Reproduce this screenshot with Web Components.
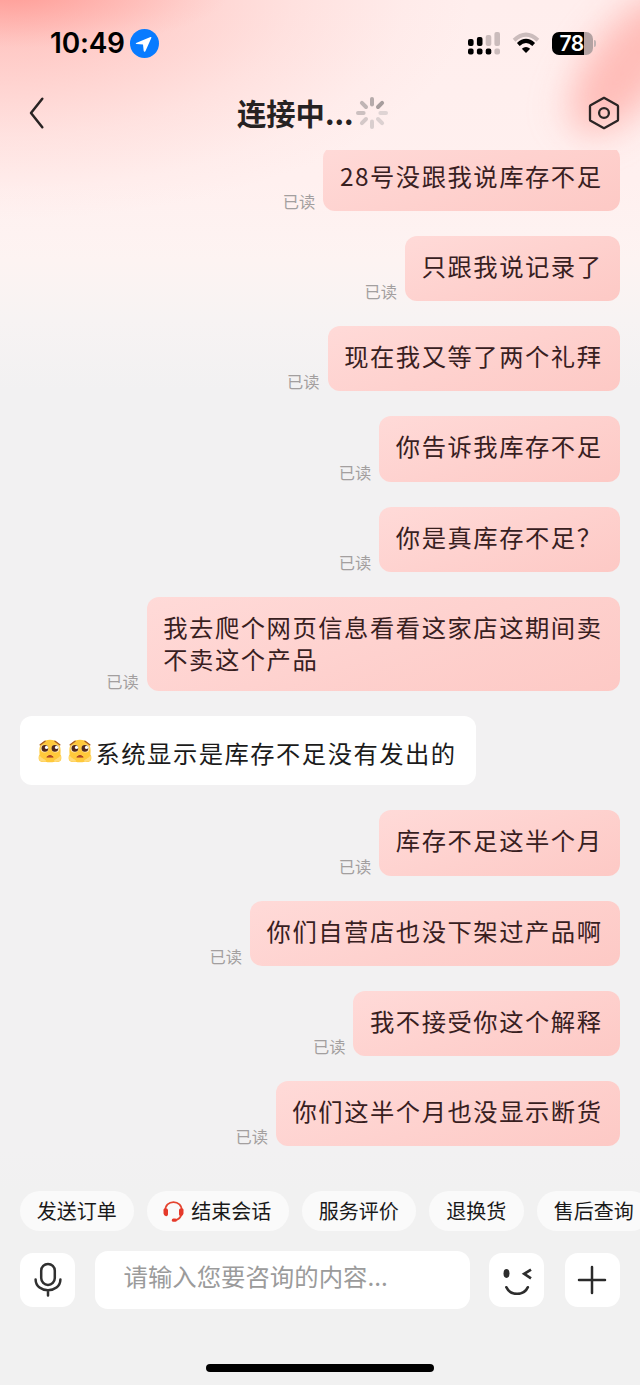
<!DOCTYPE html>
<html lang="zh-CN">
<head>
<meta charset="utf-8">
<title>客服会话</title>
<style>
html,body{margin:0;padding:0}
body{width:640px;height:1385px;overflow:hidden;background:#f2f1f2;font-family:"Noto Sans CJK SC","Inter",sans-serif}
</style>
</head>
<body>
<chat-screen></chat-screen>
<script>
const define = (name, markup) => {
  const template = document.createElement('template');
  template.innerHTML = markup;
  customElements.define(name, class extends HTMLElement {
    constructor() {
      super();
      this.attachShadow({ mode: 'open' }).append(template.content.cloneNode(true));
    }
  });
};

define('status-bar', `
<style>
:host{display:flex;align-items:center;justify-content:space-between;height:86px;box-sizing:border-box;padding:0 44px 0 50px;color:#000}
.left,.right{display:flex;align-items:center}
.time{font:600 28px/34px Inter,sans-serif;letter-spacing:-.2px;width:80px;white-space:nowrap}
svg{display:block}
.wifi{margin:0 12px 0 12px}
.battery{display:flex;align-items:center}
.cell{width:41px;height:23px;border-radius:7px;background:linear-gradient(90deg,#000 32px,#b3a2a2 32px);color:#fff;font:600 21px/23px Inter,sans-serif;letter-spacing:-.5px;text-align:center;box-sizing:border-box;padding-right:1px}
.cap{width:2.5px;height:7px;border-radius:0 3px 3px 0;background:#c1b2b2;margin-left:1px}
</style>
<div class="left"><span class="time">10:49</span>
<svg width="29" height="29" viewBox="0 0 29 29"><circle cx="14.5" cy="14.5" r="14.5" fill="#087bff"/><path d="M6.1 14.1 20.5 8.1Q21.8 7.7 21.3 9L15.4 22.3Q14.2 23.5 13.7 22L13 15.6 6.5 15Q5 14.7 6.1 14.1Z" fill="#fff"/></svg></div>
<div class="right">
<svg width="32" height="23" viewBox="0 0 32 23"><g fill="#000"><rect y="7" width="5.6" height="7" rx="2"/><rect x="8.9" y="5" width="5.6" height="9" rx="2"/><rect y="16.5" width="5.6" height="6" rx="2"/><rect x="8.9" y="16.5" width="5.6" height="6" rx="2"/><rect x="17.7" y="16.5" width="5.6" height="6" rx="2"/></g><g fill="#cbbcbc"><rect x="17.7" y="3" width="5.6" height="11" rx="2"/><rect x="26.4" y="0" width="5.6" height="14" rx="2"/><rect x="26.4" y="16.5" width="5.6" height="6" rx="2"/></g></svg>
<svg class="wifi" width="28" height="22" viewBox="0 0 28 22"><path d="M2.1 8.2Q14-2.8 25.9 8.2" fill="none" stroke="#cbbcbc" stroke-width="4"/><path d="M6.3 12.4Q14 5.4 21.7 12.4" fill="none" stroke="#000" stroke-width="4"/><path d="M9.8 16.7Q14 13.1 18.2 16.7L14 21Z"/></svg>
<div class="battery"><div class="cell">78</div><div class="cap"></div></div>
</div>`);

define('nav-bar', `
<style>
:host{display:grid;grid-template-columns:60px 1fr 60px;height:64px;box-sizing:border-box;padding-bottom:10px;align-items:center;color:#262222}
svg{display:block}
.back{margin-left:29px}
.title{display:flex;align-items:center;padding-left:177px;font-size:29.3px;font-weight:700;line-height:38px;padding-bottom:2px;white-space:nowrap}
.spin{margin:2px 0 0 2px}
.gear{margin-left:8px}
</style>
<svg class="back" width="16" height="32" viewBox="0 0 16 32"><path d="M13.3 1.8 2 16 13.3 30.2" fill="none" stroke="#282323" stroke-width="2.5" stroke-linecap="round" stroke-linejoin="round"/></svg>
<div class="title"><slot></slot><svg class="spin" width="34" height="34" viewBox="-17 -17 34 34"><g stroke-width="4" stroke-linecap="round"><path d="M0-8.4V-14" stroke="#b6abab"/><path d="m6-6 4.1-4.1" stroke="#a79d9d"/><path d="M8.4 0H14" stroke="#dfd4d4"/><path d="m6 6 4.1 4.1" stroke="#dcd1d1"/><path d="M0 8.4V14" stroke="#d9cece"/><path d="m-6 6-4.1 4.1" stroke="#d4c8c8"/><path d="M-8.4 0H-14" stroke="#ccc0c0"/><path d="m-6-6-4.1-4.1" stroke="#c0b5b5"/></g></svg></div>
<svg class="gear" width="32" height="34" viewBox="0 0 32 34"><g fill="none" stroke="#2b2525" stroke-width="2.3" stroke-linejoin="round"><path d="M16 1.8 29.4 9.2Q30 9.6 30 10.3V23.7Q30 24.4 29.4 24.8L16 32.2 2.6 24.8Q2 24.4 2 23.7V10.3Q2 9.6 2.6 9.2Z"/><circle cx="16" cy="17" r="4.9"/></g></svg>`);

define('sent-message', `
<style>
:host{display:flex;justify-content:flex-end;align-items:flex-end;gap:8px;flex:none}
.read{font-size:16.3px;line-height:20px;color:#a39f9f;white-space:nowrap}
.bubble{box-sizing:border-box;height:var(--h,65.25px);padding:14px 17.5px 0 16.5px;border-radius:12px;background:linear-gradient(160deg,#ffdad8,#fdc9c5);color:#38201f;font-size:24.3px;letter-spacing:1.54px;line-height:32.6px;white-space:nowrap}
</style>
<span class="read">已读</span><div class="bubble"><slot></slot></div>`);

define('pleading-face', `
<style>:host{display:inline-block;width:24px;height:24px}svg{display:block}</style>
<svg width="24" height="24" viewBox="0 0 24 24"><path d="M12 .8C5.4.8 1.4 5.2 1.4 11.4c0 1.5.1 2.8.2 4C.6 16.4.3 19.5 1 21c1 2.4 4.5 2.3 6.3 1.7q4.7 1 9.4 0c1.8.6 5.3.7 6.3-1.7.7-1.5.4-4.6-.6-5.6.1-1.2.2-2.5.2-4C22.6 5.2 18.6.8 12 .8Z" fill="#ffc93b"/><path d="M1.6 16.5c-1 2.5-.6 5.4 2.2 6.1 2 .3 3.6-.1 4.2-1.1-1.3-1.4-4-1.8-6.4-5Zm20.8 0c1 2.5.6 5.4-2.2 6.1-2 .3-3.6-.1-4.2-1.1 1.3-1.4 4-1.8 6.4-5Z" fill="#ffda79"/><circle cx="6.5" cy="9.6" r="3.9" fill="#ffe7b0"/><circle cx="17.5" cy="9.6" r="3.9" fill="#ffe7b0"/><circle cx="6.9" cy="9.4" r="3.3" fill="#51291c"/><circle cx="16.9" cy="9.4" r="3.3" fill="#51291c"/><circle cx="8.5" cy="8.4" r="1.6" fill="#fff"/><circle cx="18.5" cy="8.4" r="1.6" fill="#fff"/><path d="m2.2 5.8 4.8-3.6M21.8 5.8 17 2.2" stroke="#a95c22" stroke-width="1.4" stroke-linecap="round"/><path d="M8.8 18.1Q12 14.7 15.2 18.1Z" fill="#ac4526" stroke="#ac4526"/></svg>`);

define('received-message', `
<style>
:host{display:flex;flex:none}
.bubble{display:flex;box-sizing:border-box;height:69px;width:456px;padding:21px 0 0 18px;border-radius:12px;background:#fff;color:#1b1b1b;font-size:24.3px;letter-spacing:1.5px;line-height:32.6px;white-space:nowrap}
pleading-face{margin:2px 5.5px 0 0}
span{margin:0 0 0 -1.5px}
</style>
<div class="bubble"><pleading-face></pleading-face><pleading-face></pleading-face><span><slot></slot></span></div>`);

define('message-list', `
<style>
:host{display:flex;flex-direction:column;justify-content:flex-end;gap:25px;height:1004.25px;padding:0 20px 8px;overflow:hidden;box-sizing:border-box}
</style><slot></slot>`);

define('action-chip', `
<style>
:host{display:flex;flex:none;align-items:center;height:39.5px;padding:0 17.4px 0 16.8px;border-radius:20px;background:#fafafa;color:#191919;font-size:20px;line-height:39px;white-space:nowrap}
span{display:block;padding-bottom:1px}
</style><slot name="icon"></slot><span><slot></slot></span>`);

define('headset-icon', `
<style>:host{display:block;width:21px;height:21px;margin:0 7px 0 -1px}svg{display:block}</style>
<svg width="21" height="21" viewBox="0 0 21 21"><path d="M2.3 10.5C1.2-2 19.8-2 18.7 10.5M18.4 13Q17.5 18.5 11.5 19.2" fill="none" stroke="#e4442f" stroke-width="1.7"/><path d="M.5 10Q0 7.5 2.5 7.2 4.7 7 5 9v4.6Q4.7 15.4 3 15.2.8 14.6.5 12.6Zm20 0q.5-2.5-2-2.8-2.2-.2-2.5 1.8v4.6q.3 1.8 2 1.6 2.2-.6 2.5-2.6Z" fill="#e5392a"/><rect x="8.8" y="17.6" width="5" height="3.2" rx="1.5" fill="#e5392a"/></svg>`);

define('chip-row', `
<style>:host{display:flex;gap:13.3px;padding:0 0 0 20px;margin-top:37px;overflow:hidden}</style><slot></slot>`);

define('tool-button', `
<style>:host{display:flex;align-items:center;justify-content:center;width:55px;height:54.5px;border-radius:13px;background:#fff;flex:none}</style><slot></slot>`);

define('mic-icon', `<style>:host,svg{display:block}</style>
<svg width="30" height="36" viewBox="0 0 30 36"><g fill="none" stroke="#303030" stroke-width="2.5" stroke-linecap="round"><rect x="8.2" y="1.9" width="13.6" height="21" rx="6.8"/><path d="M2.6 17.5C2.8 31.8 27.2 31.8 27.4 17.5M15 28.5V33.5"/></g></svg>`);
define('wink-icon', `<style>:host,svg{display:block}</style>
<svg width="32" height="30" viewBox="0 0 32 30"><ellipse cx="5.5" cy="8.5" rx="3" ry="4.4" fill="#2d2d2d"/><path d="M30 4.6 23.2 8.9 30 13.4" fill="none" stroke="#2d2d2d" stroke-width="2.7"/><path d="M5.4 22.3C9.4 31 22.8 31 26.8 22.3" fill="none" stroke="#2d2d2d" stroke-width="2.7" stroke-linecap="round"/></svg>`);
define('plus-icon', `<style>:host,svg{display:block}</style>
<svg width="30" height="30" viewBox="0 0 30 30"><path d="M2 15H28M15 2V28" stroke="#2a2a2a" stroke-width="2.5" stroke-linecap="round"/></svg>`);

define('input-bar', `
<style>
:host{display:flex;align-items:center;height:58.5px;margin-top:20px;padding:0 20px}
.field{box-sizing:border-box;width:375px;height:58.5px;margin:0 19.3px 0 20px;padding:0 0 5px 28.5px;border-radius:13px;background:#fff;color:#9b9b9b;font-size:24.4px;line-height:50px;white-space:nowrap}
.plus{margin-left:20.7px}
</style>
<tool-button><mic-icon></mic-icon></tool-button><div class="field"><slot></slot></div><tool-button><wink-icon></wink-icon></tool-button><tool-button class="plus"><plus-icon></plus-icon></tool-button>`);

define('home-indicator', `
<style>:host{display:block;width:228px;height:8.5px;border-radius:5px;background:#000;margin:54.3px auto 0}</style>`);

define('chat-screen', `
<style>
:host{display:block;position:relative;box-sizing:border-box;width:640px;height:1385px;overflow:hidden;
background:
radial-gradient(ellipse 210px 56px at 20px -8px,rgba(255,125,117,.5),rgba(255,130,122,.27) 45%,rgba(255,130,122,.08) 80%,rgba(255,130,122,0)),
radial-gradient(ellipse 470px 220px at 0 0,rgba(255,150,143,.56),rgba(255,158,151,.4) 30%,rgba(255,165,158,.18) 62%,rgba(255,180,175,.05) 86%,rgba(255,190,185,0)),
linear-gradient(#ffeeed 0,#fff0ef 180px,#fdf3f2 260px,#f7f3f3 320px,#f2f1f2 390px,#f2f1f2 1150px,#f1f1f1 1190px)}
.glow{position:absolute;left:592px;top:-22px;width:76px;height:170px;border-radius:50%;background:rgba(255,155,148,.6);transform:rotate(38deg);filter:blur(18px)}
main{position:relative;display:flex;flex-direction:column}
</style>
<div class="glow"></div>
<main>
<status-bar></status-bar>
<nav-bar>连接中...</nav-bar>
<message-list>
<sent-message>28号没跟我说库存不足</sent-message>
<sent-message>只跟我说记录了</sent-message>
<sent-message>现在我又等了两个礼拜</sent-message>
<sent-message>你告诉我库存不足</sent-message>
<sent-message>你是真库存不足？</sent-message>
<sent-message style="--h:94.5px">我去爬个网页信息看看这家店这期间卖<br>不卖这个产品</sent-message>
<received-message>系统显示是库存不足没有发出的</received-message>
<sent-message>库存不足这半个月</sent-message>
<sent-message>你们自营店也没下架过产品啊</sent-message>
<sent-message>我不接受你这个解释</sent-message>
<sent-message>你们这半个月也没显示断货</sent-message>
</message-list>
<chip-row>
<action-chip>发送订单</action-chip>
<action-chip><headset-icon slot="icon"></headset-icon>结束会话</action-chip>
<action-chip>服务评价</action-chip>
<action-chip>退换货</action-chip>
<action-chip>售后查询</action-chip>
</chip-row>
<input-bar>请输入您要咨询的内容...</input-bar>
<home-indicator></home-indicator>
</main>`);
</script>
</body>
</html>
